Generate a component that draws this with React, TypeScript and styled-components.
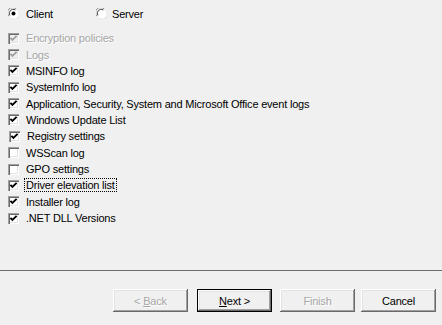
import React from "react";
import styled, { createGlobalStyle, css } from "styled-components";

const Global = createGlobalStyle`
  html, body { margin: 0; padding: 0; background: #f0f0f0; }
  body { font-family: "Liberation Sans", Arial, sans-serif; font-size: 11px; color: #000; }
  #root { width: 442px; height: 325px; }
`;

const Dialog = styled.div`
  width: 442px;
  height: 325px;
  display: flex;
  flex-direction: column;
  background: #f0f0f0;
  letter-spacing: -0.2px;
`;

const Content = styled.div`
  flex: 1;
  padding-left: 8px;
  display: flex;
  flex-direction: column;
`;

const RadioRow = styled.div`
  height: 27px;
  display: flex;
  align-items: center;
`;

const RadioItem = styled.label<{ $width?: number }>`
  display: flex;
  align-items: center;
  width: ${(p) => (p.$width ? `${p.$width}px` : "auto")};
`;

const RadioCircle = styled.span`
  width: 11px;
  height: 11px;
  flex: none;
  display: inline-flex;
`;

const List = styled.div`
  margin-top: 3px;
  display: flex;
  flex-direction: column;
`;

const Row = styled.div<{ $shift?: number }>`
  height: 16.36px;
  display: flex;
  align-items: center;
  padding-left: ${(p) => p.$shift ?? 0}px;
`;

const Box = styled.span<{ $disabled?: boolean }>`
  width: 11px;
  height: 11px;
  flex: none;
  box-sizing: border-box;
  background: ${(p) => (p.$disabled ? "#f0f0f0" : "#fff")};
  box-shadow: inset 1px 1px #a0a0a0, inset 2px 2px #696969, inset -1px -1px #fff,
    inset -2px -2px #e3e3e3;
  display: inline-flex;
  position: relative;
`;

const Label = styled.span<{ $disabled?: boolean; $focus?: boolean; $gap?: number }>`
  margin-left: ${(p) => p.$gap ?? 7}px;
  white-space: nowrap;
  line-height: 12px;
  color: ${(p) => (p.$disabled ? "#a6a6a6" : "#000")};
  ${(p) =>
    p.$disabled &&
    css`
      text-shadow: 1px 1px 0 #fff;
    `}
  ${(p) =>
    p.$focus &&
    css`
      outline: 1px dotted #000;
      outline-offset: 0px;
      padding: 0 1px;
      margin-left: 6px;
    `}
`;

const Footer = styled.div`
  height: 55px;
  box-sizing: border-box;
  border-top: 1px solid #6d6d6d;
  display: flex;
  justify-content: flex-end;
  align-items: flex-start;
  padding: 18px 6px 0 0;
`;

const Button = styled.button<{ $default?: boolean; $ml?: number }>`
  width: 75px;
  height: 23px;
  margin-left: ${(p) => p.$ml ?? 0}px;
  padding: 0;
  font-family: "Liberation Sans", Arial, sans-serif;
  font-size: 11px;
  letter-spacing: -0.2px;
  color: #000;
  background: #f0f0f0;
  border: ${(p) => (p.$default ? "1px solid #000" : "none")};
  box-sizing: border-box;
  box-shadow: inset -1px -1px #696969, inset 1px 1px #fff, inset -2px -2px #a0a0a0,
    inset 2px 2px #e3e3e3;
  &:disabled {
    color: #a6a6a6;
    text-shadow: 1px 1px 0 #fff;
  }
  u { text-decoration: underline; text-underline-offset: 1px; }
`;

const Check = ({ color }: { color: string }) => (
  <svg width="11" height="11" viewBox="0 0 11 11" style={{ position: "absolute", left: 0, top: 0 }}>
    <path d="M2.4 4.9 L4.4 7 L8.6 2.8" fill="none" stroke={color} strokeWidth="1.9" />
  </svg>
);

const Radio = ({ checked }: { checked?: boolean }) => (
  <RadioCircle>
    <svg width="11" height="11" viewBox="0 0 11 11">
      <circle cx="5.5" cy="5.5" r="5" fill="#fff" />
      <path d="M1 8.2 A5 5 0 0 1 8.2 1" fill="none" stroke="#909090" strokeWidth="1" />
      <path d="M1.9 7.4 A4 4 0 0 1 7.4 1.9" fill="none" stroke="#404040" strokeWidth="1" />
      <path d="M10 2.8 A5 5 0 0 1 2.8 10" fill="none" stroke="#e3e3e3" strokeWidth="1" />
      {checked && <circle cx="5.5" cy="5.5" r="2" fill="#000" />}
    </svg>
  </RadioCircle>
);

type Item = { label: string; checked: boolean; disabled?: boolean; focus?: boolean; shift?: number };

const items: Item[] = [
  { label: "Encryption policies", checked: true, disabled: true },
  { label: "Logs", checked: true, disabled: true },
  { label: "MSINFO log", checked: true },
  { label: "SystemInfo log", checked: true },
  { label: "Application, Security, System and Microsoft Office event logs", checked: true },
  { label: "Windows Update List", checked: true },
  { label: "Registry settings", checked: true, shift: 1 },
  { label: "WSScan log", checked: false },
  { label: "GPO settings", checked: false },
  { label: "Driver elevation list", checked: true, focus: true },
  { label: "Installer log", checked: true },
  { label: ".NET DLL Versions", checked: true },
];

export default function App() {
  return (
    <>
      <Global />
      <Dialog>
        <Content>
          <RadioRow>
            <RadioItem $width={88}>
              <Radio checked />
              <Label $gap={7}>Client</Label>
            </RadioItem>
            <RadioItem>
              <Radio />
              <Label $gap={5}>Server</Label>
            </RadioItem>
          </RadioRow>
          <List>
            {items.map((it) => (
              <Row key={it.label} $shift={it.shift}>
                <Box $disabled={it.disabled}>
                  {it.checked && <Check color={it.disabled ? "#a0a0a0" : "#000"} />}
                </Box>
                <Label $disabled={it.disabled} $focus={it.focus} $gap={7}>
                  {it.label}
                </Label>
              </Row>
            ))}
          </List>
        </Content>
        <Footer>
          <Button disabled>
            &lt; <u>B</u>ack
          </Button>
          <Button $default $ml={9}>
            <u>N</u>ext &gt;
          </Button>
          <Button disabled $ml={8}>
            Finish
          </Button>
          <Button $ml={6}>Cancel</Button>
        </Footer>
      </Dialog>
    </>
  );
}
